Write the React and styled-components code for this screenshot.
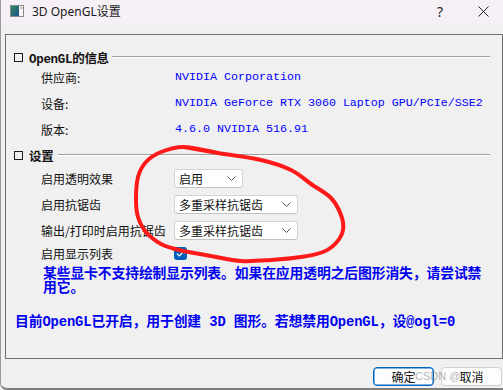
import styled, { createGlobalStyle } from 'styled-components'

const GlobalStyle = createGlobalStyle`
  html, body {
    margin: 0;
    padding: 0;
    background: #f0f0f0;
  }
  body {
    font-family: "Noto Sans", "Noto Sans CJK SC", sans-serif;
  }
`

const Window = styled.div`
  position: relative;
  width: 503px;
  height: 390px;
  box-sizing: border-box;
  overflow: hidden;
  background: #f0f0f0;
  border-left: 1px solid #9a9a9a;
  border-bottom: 2px solid #7e7e7e;
  border-bottom-left-radius: 7px;
`

const TitleBar = styled.div`
  height: 26px;
  box-sizing: border-box;
  background: #f6eff6;
  display: flex;
  align-items: center;
  padding: 0 0 4px 9px;
`

const AppIcon = styled.svg`
  flex: none;
  margin-right: 8px;
`

const TitleText = styled.span`
  font-size: 12px;
  color: #1a1a1a;
`

const CaptionBtn = styled.div`
  width: ${p => p.$w}px;
  display: flex;
  justify-content: center;
  align-items: center;
  font-size: 14px;
  color: #222;
  margin-left: ${p => (p.$first ? 'auto' : '0')};
`

const Content = styled.div`
  padding: 8px 0 0 4px;
`

const Frame = styled.div`
  width: 498px;
  height: 325px;
  box-sizing: border-box;
  border: 1px solid #6f6f6f;
  padding: 15px 12px 0 8px;
`

const GroupHeader = styled.div`
  display: flex;
  align-items: center;
  height: 14px;
  margin-top: ${p => p.$top || 0}px;
  margin-bottom: ${p => p.$bottom || 0}px;
`

const GroupBox = styled.span`
  width: 9px;
  height: 9px;
  box-sizing: border-box;
  border: 1px solid #1c1c1c;
  margin-right: 6px;
  flex: none;
`

const GroupTitle = styled.span`
  font-family: "Liberation Mono", "Noto Sans CJK SC", monospace;
  font-weight: 700;
  font-size: 12.5px;
  letter-spacing: -0.3px;
  color: #111;
  white-space: nowrap;
`

const Rule = styled.div`
  flex: 1;
  height: 0;
  border-top: 1px solid #a0a0a0;
  border-bottom: 1px solid #ffffff;
  margin-left: ${p => p.$gap}px;
`

const Row = styled.div`
  display: flex;
  align-items: center;
  height: ${p => p.$h || 26}px;
  padding-left: 27px;
`

const Label = styled.span`
  width: 133px;
  flex: none;
  font-family: "Noto Sans CJK SC", sans-serif;
  font-size: 12px;
  color: #111;
  white-space: nowrap;
`

const Value = styled.span`
  margin-left: 1px;
  font-family: "Liberation Mono", monospace;
  font-size: 11.67px;
  color: #0000ff;
  white-space: nowrap;
`

const Select = styled.div`
  width: ${p => p.$w}px;
  height: 19px;
  box-sizing: border-box;
  background: #ffffff;
  border: 1px solid #d4d4d4;
  border-bottom-color: #c2c2c2;
  border-radius: 3px;
  display: flex;
  align-items: center;
  justify-content: space-between;
  padding: 0 6px 0 4px;
  font-family: "Noto Sans CJK SC", sans-serif;
  font-size: 12px;
  color: #111;
`

const Check = styled.span`
  width: 13px;
  height: 13px;
  border-radius: 3px;
  background: #005fb8;
  display: flex;
  align-items: center;
  justify-content: center;
`

const BlueText = styled.div`
  font-family: "Liberation Mono", "Noto Sans CJK SC", monospace;
  font-weight: 700;
  font-size: 13.8px;
  line-height: 14px;
  letter-spacing: -0.1px;
  color: #0000f0;
  padding-left: ${p => p.$indent}px;
  margin-top: ${p => p.$top}px;
`

const BlueLine = styled.div`
  white-space: nowrap;
  height: 14px;
  display: flex;
  align-items: center;
`

const Footer = styled.div`
  display: flex;
  justify-content: flex-end;
  gap: 7px;
  padding-right: 1px;
  margin-top: 8px;
`

const Button = styled.div`
  width: 61px;
  height: 19px;
  box-sizing: border-box;
  border-radius: 4px;
  background: #fdfdfd;
  border: 1px solid ${p => (p.$primary ? '#0067c0' : '#d0d0d0')};
  box-shadow: ${p => (p.$primary ? 'inset 0 0 0 0.5px #0067c0' : 'none')};
  display: flex;
  align-items: center;
  justify-content: center;
  font-family: "Noto Sans CJK SC", sans-serif;
  font-size: 12px;
  color: #111;
`

const Watermark = styled.span`
  position: absolute;
  left: 414px;
  top: 370px;
  font-family: "Liberation Sans", sans-serif;
  font-size: 11px;
  line-height: 13px;
  color: rgba(130, 130, 130, 0.6);
  pointer-events: none;
`

const Annotation = styled.svg`
  position: absolute;
  left: 0;
  top: 0;
  pointer-events: none;
`

const Chevron = () => (
  <svg width="9" height="5" viewBox="0 0 9 5">
    <polyline points="0.5,0.5 4.5,4.5 8.5,0.5" fill="none" stroke="#555" strokeWidth="1" />
  </svg>
)

// hand-drawn red loop round the dropdowns
const loop = [
  [183, 147], [217, 153], [260, 160], [290, 170], [310, 184], [330, 198],
  [340, 215], [342, 230], [335, 243], [322, 252], [300, 257], [270, 260],
  [240, 261], [210, 256], [178, 250], [160, 244], [145, 232], [137, 217],
  [135, 200], [137, 177], [145, 162], [160, 152], [183, 147], [217, 153],
]

const smoothPath = pts => {
  let d = `M${pts[0][0]},${pts[0][1]}`
  for (let i = 0; i < pts.length - 1; i++) {
    const p0 = pts[i - 1] || pts[i]
    const p1 = pts[i]
    const p2 = pts[i + 1]
    const p3 = pts[i + 2] || p2
    const c1 = [p1[0] + (p2[0] - p0[0]) / 6, p1[1] + (p2[1] - p0[1]) / 6]
    const c2 = [p2[0] - (p3[0] - p1[0]) / 6, p2[1] - (p3[1] - p1[1]) / 6]
    d += ` C${c1[0]},${c1[1]} ${c2[0]},${c2[1]} ${p2[0]},${p2[1]}`
  }
  return d
}

const App = () => {
  return (
    <Window>
      <GlobalStyle />
      <TitleBar>
        <AppIcon width="14" height="12" viewBox="0 0 14 12">
          <defs>
            <linearGradient id="ic" x1="0" y1="0" x2="1" y2="1">
              <stop offset="0" stopColor="#2e8b57" />
              <stop offset="1" stopColor="#1f4f8f" />
            </linearGradient>
          </defs>
          <rect x="0.5" y="0.5" width="13" height="11" fill="#f4f4f4" stroke="#8a8a8a" />
          <rect x="1" y="1" width="8" height="10" fill="url(#ic)" />
          <rect x="10" y="2" width="3" height="2" fill="#c8c8c8" />
        </AppIcon>
        <TitleText>3D OpenGL设置</TitleText>
        <CaptionBtn $w={46} $first>?</CaptionBtn>
        <CaptionBtn $w={40}>
          <svg width="11" height="11" viewBox="0 0 11 11">
            <path d="M0.5,0.5 L10.5,10.5 M10.5,0.5 L0.5,10.5" stroke="#222" strokeWidth="1" />
          </svg>
        </CaptionBtn>
      </TitleBar>

      <Content>
        <Frame>
          <GroupHeader>
            <GroupBox />
            <GroupTitle>OpenGL的信息</GroupTitle>
            <Rule $gap={3} />
          </GroupHeader>
          <Row>
            <Label>供应商:</Label>
            <Value>NVIDIA Corporation</Value>
          </Row>
          <Row>
            <Label>设备:</Label>
            <Value>NVIDIA GeForce RTX 3060 Laptop GPU/PCIe/SSE2</Value>
          </Row>
          <Row>
            <Label>版本:</Label>
            <Value>4.6.0 NVIDIA 516.91</Value>
          </Row>

          <GroupHeader $top={6} $bottom={3}>
            <GroupBox />
            <GroupTitle>设置</GroupTitle>
            <Rule $gap={5} />
          </GroupHeader>
          <Row>
            <Label>启用透明效果</Label>
            <Select $w={69}>启用<Chevron /></Select>
          </Row>
          <Row>
            <Label>启用抗锯齿</Label>
            <Select $w={124}>多重采样抗锯齿<Chevron /></Select>
          </Row>
          <Row>
            <Label>输出/打印时启用抗锯齿</Label>
            <Select $w={124}>多重采样抗锯齿<Chevron /></Select>
          </Row>
          <Row $h={20}>
            <Label>启用显示列表</Label>
            <Check>
              <svg width="9" height="7" viewBox="0 0 9 7">
                <polyline points="0.8,3.6 3.3,6 8.2,1" fill="none" stroke="#fff" strokeWidth="1.2" />
              </svg>
            </Check>
          </Row>

          <BlueText $indent={29} $top={5}>
            <BlueLine>某些显卡不支持绘制显示列表。如果在应用透明之后图形消失，请尝试禁</BlueLine>
            <BlueLine>用它。</BlueLine>
          </BlueText>
          <BlueText $indent={1} $top={20}>
            <BlueLine>目前OpenGL已开启，用于创建 3D 图形。若想禁用OpenGL，设@ogl=0</BlueLine>
          </BlueText>
        </Frame>

        <Footer>
          <Button $primary>确定</Button>
          <Button>取消</Button>
        </Footer>
      </Content>

      <Watermark>CSDN @</Watermark>

      <Annotation width="503" height="390" viewBox="0 0 503 390">
        <path d={smoothPath(loop)} fill="none" stroke="#ff1a1a" strokeWidth="4" strokeLinecap="round" strokeLinejoin="round" />
      </Annotation>
    </Window>
  )
}

export default App
